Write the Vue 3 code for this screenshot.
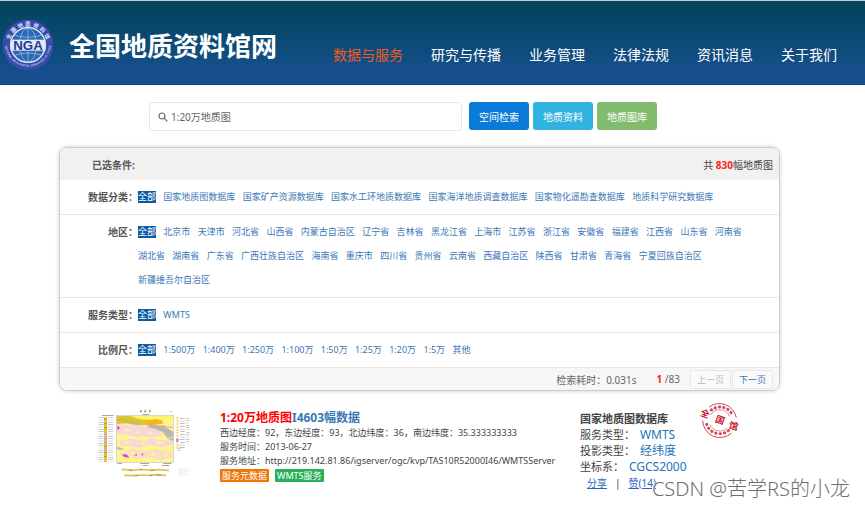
<template>
  <div class="page">
    <header class="site-header">
      <a class="brand" href="#">
        <svg class="brand-logo" viewBox="0 0 156 156" aria-hidden="true">
          <defs>
            <path id="logo-bottom" d="M 9 74 A 69 69 0 1 0 147 74" />
          </defs>
          <circle cx="78" cy="78" r="76" fill="#3a4cab" />
          <circle cx="78" cy="78" r="52" fill="#2868b5" stroke="#e4edf8" stroke-width="4" />
          <g fill="none" stroke="#a9cbed" stroke-width="2">
            <ellipse cx="78" cy="78" rx="25" ry="51" />
            <path d="M78 27V129M36 48Q78 62 120 48M36 109Q78 95 120 109" />
          </g>
          <rect x="26" y="62" width="104" height="33" fill="#dfe9f7" />
          <text x="78" y="92" class="logo-main" text-anchor="middle">NGA</text>
          <g class="logo-cn" text-anchor="middle">
            <text v-for="(char, i) in logoChars" :key="char" x="78" y="21" :transform="`rotate(${(i - 3) * 22} 78 78)`">{{ char }}</text>
          </g>
          <text class="logo-en"><textPath href="#logo-bottom" startOffset="50%" text-anchor="middle">NATIONAL GEOLOGICAL ARCHIVES OF CHINA</textPath></text>
        </svg>
        <span class="brand-name">全国地质资料馆网</span>
      </a>
      <nav class="main-nav">
        <a v-for="item in navItems" :key="item" href="#" :class="{ active: item === activeNav }">{{ item }}</a>
      </nav>
    </header>

    <form class="search" @submit.prevent>
      <label class="search-box">
        <svg viewBox="0 0 10 10" aria-hidden="true">
          <circle cx="4" cy="4" r="3" />
          <path d="M6.2 6.2L9.3 9.3" />
        </svg>
        <input v-model="keyword" type="text" aria-label="检索" />
      </label>
      <button type="submit" class="btn-space">空间检索</button>
      <button type="button" class="btn-data">地质资料</button>
      <button type="button" class="btn-map">地质图库</button>
    </form>

    <section class="filters">
      <div class="filters-head">
        <strong>已选条件:</strong>
        <span>共 <b>830</b>幅地质图</span>
      </div>
      <div v-for="group in groups" :key="group.label" class="filter-row">
        <span class="filter-label">{{ group.label }}：</span>
        <div class="filter-options">
          <template v-for="option in group.options" :key="option">
            <a href="#" :class="{ selected: option === '全部' }">{{ option }}</a>{{ ' ' }}
          </template>
        </div>
      </div>
      <div class="filters-foot">
        <span class="elapsed">检索耗时：0.031s</span>
        <span class="pages"><b>1</b> /83</span>
        <button type="button" disabled>上一页</button>
        <button type="button">下一页</button>
      </div>
    </section>

    <article class="result">
      <svg class="thumb" viewBox="24 18 276 231" role="img" aria-label="地质图">
        <rect x="80" y="47" width="170" height="140" fill="#fff48a" />
        <path d="M80 48H122L150 58L190 60L215 62L220 71L183 75L137 76L112 70L80 72Z" fill="#dfc52c" />
        <path d="M170 62L195 57L218 61L215 70L178 76Z" fill="#f0b913" />
        <path d="M119 47H250V59L222 57L205 52L170 58L145 56Z" fill="#fff36c" />
        <path d="M80 72L108 76L139 73L173 82L211 91L217 105L190 114L162 108L136 113L112 103L80 103Z" fill="#f9d6da" />
        <path d="M91 123L118 116L159 122L188 116L225 122L249 117V133L215 141L180 135L145 143L113 137L88 139Z" fill="#f9d6d8" />
        <path d="M90 156L128 146L169 154L198 147L249 158V170L211 181L175 171L139 177L116 166L94 169Z" fill="#f8dcc8" />
        <path d="M180 76L222 78L250 96V123L233 116L218 96L197 87L170 82Z" fill="#b8b8b2" />
        <path d="M80 140L103 147L91 150L80 147Z" fill="#bcbcae" />
        <path d="M80 56L114 59L159 70L143 76L80 62Z" fill="#c8bd61" />
        <path d="M170 74L190 77L225 79L249 83" fill="none" stroke="#e477bd" stroke-width="2" />
        <path d="M82 79L89 81L87 89L82 88ZM95 164L109 163L119 173L103 171ZM132 165L142 162L139 168ZM154 160L161 163L156 167Z" fill="#cc43bf" />
        <g fill="none" stroke="#fffab9" stroke-width="2">
          <path d="M81 110L103 115L130 111L160 118L191 111L217 116L249 112M81 159L109 156L136 163M160 183L185 176L208 185L248 177" />
        </g>
        <g fill="#fff59b">
          <path v-for="spot in mapSpots" :key="spot" :d="spot" />
        </g>
        <rect x="80" y="47" width="170" height="140" fill="none" stroke="#999" stroke-width="1" />
        <g fill="#8a8a8a">
          <path d="M150 31H155V37H150ZM163 31H168V37H163ZM177 31H182V37H177ZM36 45H71V47H36ZM157 43H177V45H157ZM82 190H96V192H82ZM151 190H177V192H151ZM220 190H244V192H220ZM158 195H174V197H158ZM215 196H239V198H215Z" />
        </g>
        <rect x="42" y="52" width="9" height="134" fill="#e5c82d" />
        <path d="M42 57H51M42 71H51M42 83H51M42 139H51M42 158H51M42 169H51" stroke="#b89d2d" stroke-width="4" />
        <path d="M42 101H51M42 116H51M42 127H51M42 149H51" stroke="#d4a4bc" stroke-width="8" />
        <path d="M33 52V186M62 52V186" stroke="#bbb" stroke-width="16" stroke-dasharray="2 5" />
        <path d="M262 52V147" stroke="#e7cd55" stroke-width="6" stroke-dasharray="4 5" />
        <path d="M262 116V125" stroke="#da59cc" stroke-width="6" />
        <path d="M277 54V145" stroke="#aaa" stroke-width="15" stroke-dasharray="2 6" />
        <path d="M293 54V132M267 137V153M243 34V40" stroke="#bbb" stroke-width="10" stroke-dasharray="2 5" />
        <path d="M97 208L126 211L153 208L181 211L209 209L234 211M105 226L130 227L156 225L179 226L201 224L226 226" fill="none" stroke="#dac94b" stroke-width="5" />
        <path d="M117 210H128M151 209H157M181 210H194M135 227H145M179 226H187M199 225H213" stroke="#b480a3" stroke-width="3" />
        <path d="M96 205V213M236 207V215M105 223V230M226 222V229" stroke="#777" />
        <path d="M269 207H292V225H269ZM272 211L288 222M288 211L272 222" fill="none" stroke="#999" stroke-dasharray="3 2" />
      </svg>

      <div class="result-main">
        <h2><a href="#"><em>1:20万地质图</em>I4603幅数据</a></h2>
        <p>西边经度：92，东边经度：93，北边纬度：36，南边纬度：35.333333333</p>
        <p>服务时间：2013-06-27</p>
        <p>服务地址：http://219.142.81.86/igserver/ogc/kvp/TAS10R52000I46/WMTSServer</p>
        <div class="tags">
          <a class="tag-meta" href="#">服务元数据</a>
          <a class="tag-wmts" href="#">WMTS服务</a>
        </div>
      </div>

      <div class="result-side">
        <div class="side-info">
          <strong>国家地质图数据库</strong>
          <p>服务类型： <span>WMTS</span></p>
          <p>投影类型： <span>经纬度</span></p>
          <p>坐标系： <span>CGCS2000</span></p>
          <div class="actions"><a href="#">分享</a><i>|</i><a href="#">赞(14)</a></div>
        </div>
        <svg class="stamp" viewBox="-6 0 126 114" role="img" aria-label="全国馆">
          <g fill="none" stroke="#cf4a58">
            <path d="M27 18A52 52 0 0 1 109 50M8 58A52 52 0 0 0 94 97" stroke-width="3" />
            <path d="M32 42A31 31 0 0 1 88 46M30 70A31 31 0 0 0 82 80" stroke-width="2" />
            <path d="M34 27A41 41 0 0 1 98 44M20 70A41 41 0 0 0 86 88" stroke-width="9" stroke-linecap="round" stroke-dasharray="1 12" />
          </g>
          <g class="stamp-text" text-anchor="middle">
            <text x="15" y="48" transform="rotate(20 15 38)">全</text>
            <text x="60" y="67" transform="rotate(20 60 57)">国</text>
            <text x="101" y="85" transform="rotate(15 101 75)">馆</text>
          </g>
        </svg>
      </div>
    </article>

    <div class="watermark">CSDN @苦学RS的小龙</div>
  </div>
</template>

<script setup>
import { ref } from 'vue'

const keyword = ref('1:20万地质图')
const activeNav = ref('数据与服务')
const navItems = ['数据与服务', '研究与传播', '业务管理', '法律法规', '资讯消息', '关于我们']
const logoChars = ['全', '国', '地', '质', '资', '料', '馆']

const groups = [
  {
    label: '数据分类',
    options: ['全部', '国家地质图数据库', '国家矿产资源数据库', '国家水工环地质数据库', '国家海洋地质调查数据库', '国家物化遥勘查数据库', '地质科学研究数据库']
  },
  {
    label: '地区',
    options: [
      '全部', '北京市', '天津市', '河北省', '山西省', '内蒙古自治区', '辽宁省', '吉林省', '黑龙江省', '上海市', '江苏省',
      '浙江省', '安徽省', '福建省', '江西省', '山东省', '河南省', '湖北省', '湖南省', '广东省', '广西壮族自治区', '海南省',
      '重庆市', '四川省', '贵州省', '云南省', '西藏自治区', '陕西省', '甘肃省', '青海省', '宁夏回族自治区', '新疆维吾尔自治区'
    ]
  },
  { label: '服务类型', options: ['全部', 'WMTS'] },
  { label: '比例尺', options: ['全部', '1:500万', '1:400万', '1:250万', '1:100万', '1:50万', '1:25万', '1:20万', '1:5万', '其他'] }
]

// small yellow patches scattered over the map sheet
const mapSpots = [
  'M103 89L113 85L121 91L111 94Z',
  'M135 96L147 93L152 99L141 102Z',
  'M173 99L182 95L190 101L179 104Z',
  'M102 126L111 123L119 128L109 131Z',
  'M151 129L162 125L169 131L159 135Z',
  'M198 126L210 124L217 130L204 133Z',
  'M119 157L130 153L137 158L126 163Z',
  'M180 160L190 157L200 164L187 168Z',
  'M219 164L229 160L237 166L226 170Z'
]
</script>

<style>
body {
  margin: 0;
  background: #fff;
}
</style>

<style scoped>
.page {
  position: relative;
  font-family: "Noto Sans", "Noto Sans CJK SC", sans-serif;
  font-size: 10px;
  color: #444;
  padding-bottom: 12px;
}
a {
  color: #3b78b5;
  text-decoration: none;
}
button,
input {
  font-family: inherit;
}
p,
h2 {
  margin: 0;
}

/* HEADER */
.site-header {
  display: flex;
  justify-content: space-between;
  box-sizing: border-box;
  height: 85px;
  padding: 0 28px 0 2px;
  border-top: 1px solid #c3cccf;
  border-bottom: 1px solid #0b4594;
  background: linear-gradient(#03445f 5%, #0b4a76 50%, #18508f 90%);
}
.brand {
  display: flex;
  align-items: center;
  gap: 15px;
  color: #fff;
}
.brand-logo {
  width: 52px;
  height: 52px;
  margin-top: 4px;
}
.brand-name {
  font-size: 26px;
  font-weight: 700;
  line-height: 30px;
  padding-top: 6px;
  white-space: nowrap;
}
.logo-main {
  font: 700 40px "Liberation Sans", sans-serif;
  fill: #26388f;
}
.logo-cn {
  font-size: 16px;
  font-weight: 700;
  fill: #dce6fa;
}
.logo-en {
  font: 700 9px "Liberation Sans", sans-serif;
  fill: #b7c6ec;
}
.main-nav {
  display: flex;
  align-items: center;
  gap: 28px;
  padding-top: 24px;
}
.main-nav a {
  color: #fff;
  font-size: 14px;
  line-height: 20px;
  white-space: nowrap;
}
.main-nav a.active {
  color: #f15a1e;
}

/* SEARCH */
.search {
  display: flex;
  gap: 4px;
  margin: 17px 208px 0 149px;
}
.search-box {
  display: flex;
  flex: 1;
  align-items: center;
  gap: 3px;
  box-sizing: border-box;
  height: 29px;
  margin-right: 3px;
  padding: 0 8px;
  border: 1px solid #e8e8e8;
  border-radius: 3px;
}
.search-box svg {
  width: 10px;
  height: 10px;
  fill: none;
  stroke: #666;
  stroke-width: 1.2;
}
.search-box input {
  flex: 1;
  min-width: 0;
  padding: 0;
  border: 0;
  outline: 0;
  background: transparent;
  font-size: 10px;
  color: #666;
}
.search button {
  width: 60px;
  height: 28px;
  padding: 0;
  border: 0;
  border-radius: 3px;
  color: #fff;
  font-size: 10px;
}
.btn-space {
  background: #0a7bd8;
}
.btn-data {
  background: #31b3e2;
}
.btn-map {
  background: #83bc6e;
}

/* FILTERS */
.filters {
  margin: 16px 85px 0 59px;
  border: 1px solid #ccc;
  border-radius: 8px;
  box-shadow: 0 0 4px #ccc;
  overflow: hidden;
}
.filters-head {
  display: flex;
  align-items: center;
  justify-content: space-between;
  height: 32px;
  padding: 0 6px 0 32px;
  background: #f1f1f1;
}
.filters-head strong {
  color: #555;
}
.filters-head b,
.pages b {
  color: #f22;
}
.filter-row {
  display: flex;
  padding: 5px 24px 5px 0;
  border-bottom: 1px solid #e8e8e8;
  line-height: 24px;
}
.filter-label {
  flex: none;
  width: 78px;
  text-align: right;
  font-weight: 700;
  color: #555;
}
.filter-options {
  font-size: 9px;
}
.filter-options a {
  display: inline-block;
  margin-right: 5px;
  line-height: 12px;
}
.filter-options a.selected {
  background: #0b5ba3;
  color: #fff;
}
.filters-foot {
  display: flex;
  align-items: center;
  justify-content: flex-end;
  height: 22px;
  padding-right: 6px;
  background: #f7f7f7;
  color: #666;
}
.pages {
  margin: 0 9px 0 20px;
}
.filters-foot button {
  width: 41px;
  height: 19px;
  margin-left: 1px;
  padding: 0;
  border: 1px solid #e8e8e8;
  border-radius: 2px;
  background: #fafafa;
  color: #3b78b5;
  font-size: 9px;
}
.filters-foot button:disabled {
  color: #bbb;
}

/* RESULT */
.result {
  display: flex;
  margin: 15px 85px 0 98px;
}
.thumb {
  flex: none;
  width: 92px;
  height: 77px;
}
.result-main {
  flex: 1;
  margin-left: 30px;
  padding-top: 3px;
  font-size: 9px;
  line-height: 14px;
  white-space: nowrap;
}
.result-main h2 {
  font-size: 12px;
  line-height: 17px;
}
.result-main em {
  font-style: normal;
  color: #f00;
}
.tags {
  display: flex;
  gap: 6px;
  margin-top: 1px;
}
.tags a {
  padding: 0 2px;
  border-radius: 1px;
  color: #fff;
  line-height: 13px;
}
.tags .tag-meta {
  background: #ee760b;
}
.tags .tag-wmts {
  background: #28b158;
}
.result-side {
  display: flex;
  flex: none;
  width: 200px;
  align-items: flex-start;
}
.side-info {
  width: 118px;
  padding-top: 5px;
  font-size: 11px;
  line-height: 16px;
  white-space: nowrap;
}
.side-info span {
  margin-left: 2px;
  font-size: 12px;
  color: #1b75b8;
}
.actions {
  display: flex;
  gap: 8px;
  padding-left: 7px;
  font-size: 10px;
}
.actions a {
  color: #2866c4;
  text-decoration: underline;
}
.actions i {
  font-style: normal;
}
.stamp {
  width: 42px;
  height: 38px;
  margin-top: -5px;
}
.stamp-text {
  font-size: 28px;
  font-weight: 700;
  fill: #c32230;
}

.watermark {
  position: absolute;
  right: 15px;
  bottom: 0;
  font-size: 20px;
  font-weight: 300;
  line-height: 28px;
  color: #6e6e6e;
  text-shadow: 0 0 1px #fff;
}
</style>
